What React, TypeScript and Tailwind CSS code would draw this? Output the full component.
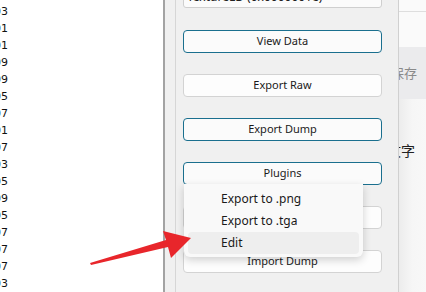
import React from 'react';

const rows = ['3', '1', '1', '9', '9', '5', '7', '1', '7', '3', '5', '9', '5', '7', '7', '7', '3'];

const buttons = [
  { label: 'View Data', active: true },
  { label: 'Export Raw', active: false },
  { label: 'Export Dump', active: true },
  { label: 'Plugins', active: true },
  { label: 'Import Raw', active: false },
  { label: 'Import Dump', active: false },
];

const menuItems = ['Export to .png', 'Export to .tga', 'Edit'];

export default function App() {
  return (
    <div className="relative w-[426px] h-[292px] overflow-hidden flex bg-[#f0f0f0] font-['Noto_Sans',sans-serif]">
      {/* Left list */}
      <div className="w-[163px] shrink-0 bg-white overflow-hidden pt-[3px]">
        {rows.map((d, i) => (
          <div
            key={i}
            className="h-[17px] leading-[17px] text-[11px] text-[#111] whitespace-nowrap -ml-[6px] font-['DejaVu_Sans',sans-serif]"
          >
            {'0' + d}
          </div>
        ))}
      </div>
      <div className="w-[2px] shrink-0 bg-[#a3a3a3]" />
      <div className="w-[10px] shrink-0 bg-[#f0f0f0]" />
      <div className="w-px shrink-0 bg-[#d6d6d6]" />

      {/* Middle panel */}
      <div className="relative w-[222px] shrink-0 bg-[#f0f0f0] pl-[7px] pr-[16px]">
        <div className="-mt-[14px] h-[22px] border border-[#cfcfcf] bg-[#fbfbfb] rounded-[3px] px-[3px] text-[12px] leading-[20px] text-[#222] overflow-hidden whitespace-nowrap">
          TextureLD (0x0000001e)
        </div>
        <div className="flex flex-col gap-[21px] mt-[22px]">
          {buttons.map((b) => (
            <div
              key={b.label}
              className={`h-[23px] rounded-[4px] border flex items-center justify-center text-[11px] text-[#1a1a1a] ${
                b.active ? 'border-[#1a6f8e] bg-[#fbfbfb]' : 'border-[#d3d3d3] bg-[#fdfdfd]'
              }`}
            >
              {b.label}
            </div>
          ))}
        </div>

        {/* Popup menu */}
        <div className="absolute left-[8px] top-[184px] w-[179px] h-[73px] bg-[#f9f9f9] rounded-b-[6px] shadow-[0_3px_8px_rgba(0,0,0,0.18)] pt-[4px] px-[4px]">
          {menuItems.map((m, i) => (
            <div
              key={m}
              className={`h-[22px] leading-[22px] pl-[33px] text-[12px] text-[#1a1a1a] rounded-[4px] ${
                i === 2 ? 'bg-[#eeeeee]' : ''
              }`}
            >
              {m}
            </div>
          ))}
        </div>
      </div>
      <div className="w-px shrink-0 bg-[#d0d0d0]" />

      {/* Right panel */}
      <div className="flex-1 overflow-hidden flex flex-col bg-gradient-to-r from-[#ececec] via-[#f6f6f6] to-[#f8f8f8]">
        <div className="h-[12px] bg-[#fafafa] border-b border-[#dedede]" />
        <div className="h-[35px] bg-[#fafafa]" />
        <div className="h-[52px] bg-[#ebebed] flex items-center">
          <span className="-ml-[8px] text-[13px] text-[#8a8a8a] whitespace-nowrap font-['Noto_Sans_CJK_SC',sans-serif]">
            保存
          </span>
        </div>
        <div className="pt-[43px] flex">
          <span className="-ml-[12px] text-[14px] leading-[16px] text-[#222] whitespace-nowrap font-['Noto_Sans_CJK_SC',sans-serif]">
            文字
          </span>
        </div>
      </div>

      {/* Red annotation arrow */}
      <svg className="absolute left-0 top-0 pointer-events-none" width="426" height="292" viewBox="0 0 426 292">
        <polygon points="90,263 166,240 163,231 191,238 171,258 168,247 91,265" fill="#e8262b" />
      </svg>
    </div>
  );
}
